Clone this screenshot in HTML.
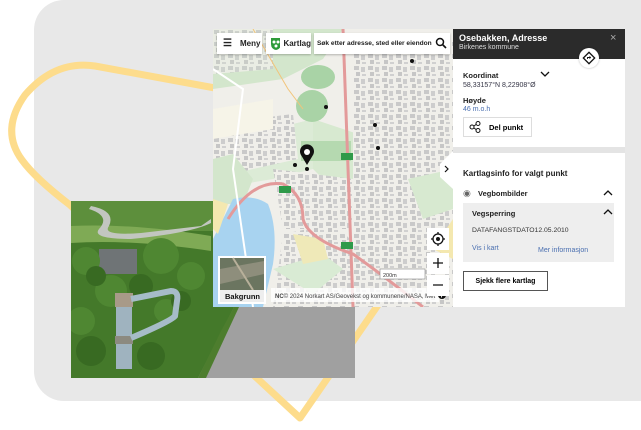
<!DOCTYPE html>
<html><head><meta charset="utf-8"><style>
*{margin:0;padding:0;box-sizing:border-box}
body{width:641px;height:430px;background:#fff;position:relative;overflow:hidden;font-family:"Liberation Sans",sans-serif;}
.bg{position:absolute;left:34px;top:0;width:640px;height:401px;background:#e8e8e8;border-radius:30px;}
.abs{position:absolute}
.btn{position:absolute;background:#fff;box-shadow:0 1px 2px rgba(0,0,0,.25);font-size:8px;font-weight:bold;color:#222;display:flex;align-items:center;white-space:nowrap;overflow:hidden}
.panel{position:absolute;left:453px;top:29px;width:172px;height:278px;background:#fff}
.hdr{height:30px;background:#2b2b2b;color:#fff;padding:4px 6px}
.t1{font-size:9px;font-weight:bold}
.t2{font-size:7px;color:#ddd;margin-top:1px}
.lbl{font-size:7.5px;font-weight:bold;color:#222}
.val{font-size:7px;color:#334;}
.lnk{font-size:7px;color:#4a6fb0}
</style></head><body>
<div class="bg"></div>
<svg class="abs" style="left:0;top:0" width="641" height="430">
<path d="M215 88 L95 66 Q55 60 25 95 Q0 130 22 160 Q35 178 70 205 L300 418 L378 305" fill="none" stroke="#fddc8c" stroke-width="7" stroke-linejoin="round" stroke-linecap="round"/>
</svg>
<!-- photo -->
<svg class="abs" style="left:71px;top:201px" width="284" height="177">
<rect width="284" height="177" fill="#44792a"/>
<rect x="0" y="0" width="284" height="30" fill="#5d8f3c"/>
<path d="M0 25 Q60 22 140 35 L140 50 Q60 38 0 42Z" fill="#7faa55"/>
<path d="M20 5 Q45 10 38 25 Q30 35 70 32 L130 25 L140 18 L140 22 Q120 32 60 38 Q20 38 28 28 Q40 15 18 8Z" fill="#c2c6c0"/>
<rect x="28" y="48" width="38" height="25" fill="#6f7476"/>
<g fill="#4f8732"><circle cx="15" cy="60" r="14"/><circle cx="90" cy="55" r="18"/><circle cx="120" cy="75" r="14"/><circle cx="40" cy="90" r="16"/><circle cx="10" cy="120" r="14"/><circle cx="95" cy="110" r="12"/></g>
<g fill="#386a22"><circle cx="25" cy="75" r="10"/><circle cx="70" cy="85" r="12"/><circle cx="110" cy="100" r="10"/><circle cx="20" cy="150" r="15"/><circle cx="80" cy="155" r="14"/></g>
<path d="M163 106 L284 106 L284 177 L127 177Z" fill="#a0a0a0"/>
<path d="M150 130 L163 106 L168 106 L135 177 L127 177Z" fill="#4d7d2e"/>
<rect x="45" y="93" width="16" height="75" fill="#9fb3bf"/>
<rect x="44" y="92" width="18" height="14" fill="#a89a88"/>
<rect x="44" y="135" width="18" height="8" fill="#8c8a80"/>
<path d="M60 98 L100 90 Q108 90 106 100 L104 115 Q100 120 60 137" fill="none" stroke="#a6bcc8" stroke-width="6"/>
</svg>
<!-- map -->
<svg class="abs" style="left:213px;top:29px" width="240" height="278">
<defs><pattern id="bld" width="14" height="12" patternUnits="userSpaceOnUse">
<rect width="14" height="12" fill="#f0efea"/><rect x="1" y="1" width="5" height="4" fill="#c9c9c9"/><rect x="8" y="2" width="4" height="5" fill="#cdcdcd"/><rect x="3" y="7" width="4" height="4" fill="#c6c6c6"/><rect x="9" y="9" width="4" height="2" fill="#d0d0d0"/></pattern></defs>
<rect width="240" height="278" fill="#f0efea"/>
<path d="M0 60 L70 50 L110 30 L130 0 L0 0Z" fill="#d3e6cc"/>
<path d="M0 0 L60 0 L60 40 L0 45Z" fill="url(#bld)" opacity=".8"/>
<path d="M0 120 L60 100 L100 90 L120 110 L100 140 L60 150 L0 160Z" fill="#dcebd6"/>
<path d="M0 95 L80 85 L85 130 L40 140 L0 150Z" fill="url(#bld)"/>
<path d="M100 90 L160 110 L170 150 L130 170 L100 140Z" fill="#d7e9d0"/>
<ellipse cx="105" cy="48" rx="17" ry="12" fill="#a9d3a6"/>
<ellipse cx="99" cy="77" rx="16" ry="16" fill="#a9d3a6"/>
<rect x="88" y="112" width="50" height="20" fill="#b5d9b0"/>
<path d="M0 130 L20 125 L40 150 L30 175 L0 175Z" fill="#d3e6cc"/>
<path d="M0 80 L60 70 L60 100 L0 110Z" fill="#f6f4e8"/>
<path d="M140 20 L240 10 L240 278 L140 278Z" fill="url(#bld)"/>
<path d="M175 40 L240 30 L240 130 L200 150 L170 110Z" fill="url(#bld)"/>
<path d="M195 150 L240 140 L240 180 L210 190Z" fill="#d7e9d0"/>
<path d="M60 140 L140 150 L140 200 L70 200Z" fill="url(#bld)"/>
<path d="M20 170 Q40 165 55 175 Q65 200 60 235 L50 278 L0 278 L0 210Z" fill="#a8d3f0"/>
<path d="M70 205 L120 195 L160 230 L150 278 L60 278Z" fill="url(#bld)"/>
<path d="M60 240 L110 225 L130 240 L100 265Z" fill="#d9ebd4"/>
<path d="M80 205 L110 210 L115 230 L90 235Z" fill="#efe9b8"/>
<path d="M240 190 L220 220 L240 230Z" fill="#f4e8b0"/>
<path d="M0 170 L15 175 L5 205 L0 200Z" fill="#f4e8b0"/>
<path d="M130 0 L140 278" stroke="#e39a9a" stroke-width="3"/>
<path d="M15 190 Q40 150 70 155 Q90 165 90 190 Q95 210 140 225 Q175 250 210 278" fill="none" stroke="#e39a9a" stroke-width="3"/>
<path d="M0 40 L30 60 L20 140 L40 278" fill="none" stroke="#fff" stroke-width="2"/>
<path d="M40 0 L75 60 L90 80" fill="none" stroke="#f2c47a" stroke-width="1"/>
<g fill="#111"><circle cx="199" cy="32" r="2"/><circle cx="113" cy="78" r="2"/><circle cx="162" cy="96" r="2"/><circle cx="165" cy="119" r="2"/><circle cx="82" cy="136" r="2"/><circle cx="94" cy="140" r="2"/></g>
<path d="M94 136 L88 126 A7 7 0 1 1 100 126Z" fill="#111"/><circle cx="94" cy="123" r="3" fill="#fff"/>
<g fill="#2f9a4a"><rect x="128" y="124" width="12" height="7"/><rect x="66" y="157" width="12" height="7"/><rect x="128" y="213" width="12" height="7"/></g>
<rect x="167" y="240" width="45" height="10" fill="#fff" stroke="#888" stroke-width=".6"/>
<text x="170" y="248" font-size="5.5" fill="#333" font-family="Liberation Sans">200m</text>
<rect x="58" y="259" width="168" height="14" fill="#fff" opacity=".8"/>
<text x="62" y="269" font-size="6" fill="#444" font-family="Liberation Sans"><tspan font-weight="bold">NC</tspan>© 2024 Norkart AS/Geovekst og kommunene/NASA, Met</text>
<circle cx="229" cy="266" r="4" fill="#111"/><text x="227.8" y="268.5" font-size="6" fill="#fff" font-weight="bold" font-family="Liberation Sans">i</text>
<rect x="5" y="227" width="48" height="48" fill="#fff"/>
<rect x="7" y="229" width="44" height="32" fill="#6b7560"/>
<path d="M7 240 L51 232 L51 245 L7 255Z" fill="#8e8e7c"/><path d="M20 229 L40 261" stroke="#b8b09a" stroke-width="2"/>
<rect x="7" y="261" width="44" height="12" fill="#eee"/>
<text x="12" y="270" font-size="7.5" font-weight="bold" fill="#111" font-family="Liberation Sans">Bakgrunn</text>
<rect x="214" y="199" width="22" height="22" fill="#fff"/>
<circle cx="225" cy="210" r="5" fill="none" stroke="#111" stroke-width="1.3"/><circle cx="225" cy="210" r="2" fill="#111"/>
<path d="M225 203 V205 M225 215 V217 M218 210 H220 M230 210 H232" stroke="#111" stroke-width="1.3"/>
<rect x="214" y="224" width="22" height="21" fill="#fff"/><rect x="214" y="246" width="22" height="21" fill="#fff"/>
<path d="M220 234 H230 M225 229 V239 M220 256 H230" stroke="#111" stroke-width="1.3"/>
<path d="M227 135 L240 122 L240 160 L227 148Z" fill="#fff"/>
<path d="M232 137 L235 140 L232 143" fill="none" stroke="#111" stroke-width="1.2"/>
</svg>
<div class="btn" style="left:217px;top:33px;width:45px;height:21px;padding-left:6px"><span style="font-size:10px;margin-right:8px">☰</span>Meny</div>
<div class="btn" style="left:266px;top:33px;width:45px;height:21px;padding-left:4px">
<svg width="12" height="14" style="margin-right:3px"><path d="M1 1 H11 V7 Q11 12 6 13 Q1 12 1 7Z" fill="#2e9b3a"/><circle cx="4" cy="5" r="1.5" fill="#fff"/><circle cx="8" cy="5" r="1.5" fill="#fff"/><circle cx="6" cy="9" r="1.5" fill="#fff"/></svg>Kartlag</div>
<div class="btn" style="left:314px;top:33px;width:136px;height:21px;padding-left:3px;font-size:6.6px">Søk etter adresse, sted eller eiendon
<svg width="12" height="12" style="position:absolute;right:3px;top:4px;background:#fff"><circle cx="5" cy="5" r="3.5" fill="none" stroke="#111" stroke-width="1.5"/><path d="M7.5 7.5 L11 11" stroke="#111" stroke-width="1.6"/></svg></div>
<div class="panel">
<div class="hdr"><div class="t1">Osebakken, Adresse</div><div class="t2">Birkenes kommune</div></div>
<div class="abs" style="left:157px;top:3px;color:#aaa;font-size:11px">×</div>
<div class="abs" style="left:126px;top:19px;width:20px;height:20px;border-radius:50%;background:#fff;box-shadow:0 0 2px rgba(0,0,0,.3)"><svg width="20" height="20"><rect x="6" y="6" width="8" height="8" transform="rotate(45 10 10)" fill="none" stroke="#111" stroke-width="1.3"/><path d="M8.5 11 V9.5 H11.5 M10.5 8.5 L11.5 9.5 L10.5 10.5" stroke="#111" fill="none" stroke-width=".9"/></svg></div>
<div class="abs lbl" style="left:10px;top:42px">Koordinat</div>
<svg class="abs" style="left:87px;top:41px" width="10" height="8"><path d="M1 2 L5 6 L9 2" fill="none" stroke="#111" stroke-width="1.3"/></svg>
<div class="abs val" style="left:10px;top:53px">58,33157°N 8,22908°Ø</div>
<div class="abs lbl" style="left:10px;top:67px">Høyde</div>
<div class="abs val" style="left:10px;top:77px;color:#4a6fb0">46 m.o.h</div>
<div class="abs" style="left:10px;top:88px;width:69px;height:20px;border:1px solid #ddd;font-size:7.5px;font-weight:bold;padding:5px 0 0 25px">Del punkt
<svg class="abs" style="left:5px;top:3px" width="12" height="12"><circle cx="3" cy="6" r="2" fill="none" stroke="#111"/><circle cx="9" cy="2.5" r="2" fill="none" stroke="#111"/><circle cx="9" cy="9.5" r="2" fill="none" stroke="#111"/><path d="M5 5 L7 3.5 M5 7 L7 8.5" stroke="#111"/></svg></div>
<div class="abs" style="left:0;top:118px;width:172px;height:6px;background:#e4e4e4"></div>
<div class="abs lbl" style="left:10px;top:140px;font-size:8px">Kartlagsinfo for valgt punkt</div>
<div class="abs" style="left:10px;top:159px;font-size:9px;color:#666">◉</div>
<div class="abs lbl" style="left:25px;top:160px">Vegbombilder</div>
<svg class="abs" style="left:150px;top:160px" width="10" height="8"><path d="M1 6 L5 2 L9 6" fill="none" stroke="#111" stroke-width="1.3"/></svg>
<div class="abs" style="left:10px;top:174px;width:151px;height:59px;background:#eee"></div>
<div class="abs lbl" style="left:19px;top:180px">Vegsperring</div>
<svg class="abs" style="left:150px;top:179px" width="10" height="8"><path d="M1 6 L5 2 L9 6" fill="none" stroke="#111" stroke-width="1.3"/></svg>
<div class="abs val" style="left:19px;top:198px;color:#333;font-size:6.8px">DATAFANGSTDATO12.05.2010</div>
<div class="abs lnk" style="left:19px;top:216px">Vis i kart</div>
<div class="abs lnk" style="left:85px;top:218px">Mer informasjon</div>
<div class="abs" style="left:10px;top:242px;width:85px;height:20px;border:1px solid #555;font-size:7px;font-weight:bold;text-align:center;padding-top:6px">Sjekk flere kartlag</div>
</div>
</body></html>
